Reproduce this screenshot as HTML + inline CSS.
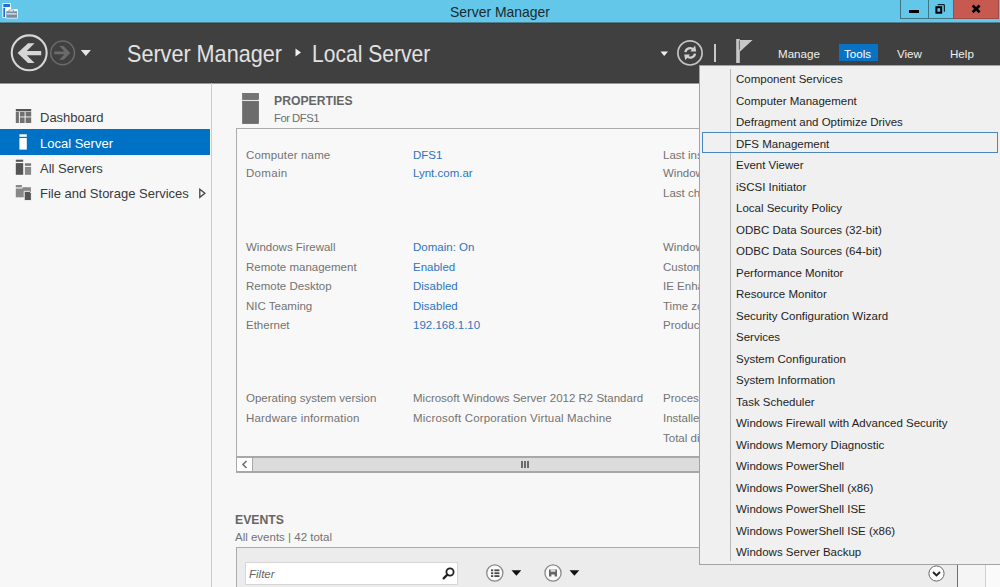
<!DOCTYPE html>
<html><head><meta charset="utf-8">
<style>
*{margin:0;padding:0;box-sizing:border-box}
html,body{width:1000px;height:587px;overflow:hidden;background:#f7f7f7;font-family:"Liberation Sans",sans-serif;position:relative}
.a{position:absolute;white-space:nowrap;line-height:1}
#title{left:0;top:0;width:1000px;height:22px;background:#63c7e9}
#hdr{left:0;top:22px;width:1000px;height:61px;background:#404040;border-top:1px solid #52808f;box-shadow:inset 0 1px 0 #3a3a3a,inset 0 -1px 0 #393939,0 1px 0 #9a9a9a}
.nav{font-size:13px;color:#3a3a3a;left:40px}
.lbl{font-size:11.5px;color:#737373}
.val{font-size:11.5px;color:#2f74c0}
#menu{left:699px;top:65px;width:320px;height:500px;background:#f0f0f0;border:1px solid #a3a3a3}
.mi{font-size:11.5px;color:#1e1e1e;left:736px}
.wb{top:0;height:19px;border:1px solid #3f7585;border-top:none}
</style></head><body>
<div id="title" class="a"></div>
<!-- app icon -->
<svg class="a" style="left:0;top:0" width="20" height="20" viewBox="0 0 20 20">
  <rect x="2.4" y="3" width="8.6" height="15" fill="#fff" rx="0.8"/>
  <rect x="3.3" y="4" width="6.8" height="3" fill="#1a73d0"/>
  <rect x="3.3" y="7.8" width="1.9" height="9.4" fill="#1a73d0"/>
  <rect x="5.5" y="9" width="12.4" height="9.6" fill="#fff" rx="1"/>
  <rect x="6.3" y="11.2" width="10.8" height="6.6" fill="#7b8ea0"/>
  <rect x="8.6" y="9.6" width="5.2" height="1.8" fill="#7b8ea0"/>
  <rect x="9.4" y="10.3" width="3.6" height="1" fill="#fff"/>
  <rect x="6.8" y="13.4" width="9.8" height="1" fill="#fff"/>
</svg>
<div class="a" style="left:450px;top:4px;font-size:15px;color:#1b2a30;transform:scaleX(0.93);transform-origin:0 0">Server Manager</div>
<div class="a wb" style="left:900px;width:29px;background:#63c7e9"></div>
<div class="a wb" style="left:928px;width:26px;background:#63c7e9"></div>
<div class="a wb" style="left:953px;width:46px;background:#c75a50;border-color:#9c4a44"></div>
<div class="a" style="left:909px;top:10px;width:10px;height:3px;background:#000"></div>
<svg class="a" style="left:925px;top:0" width="65" height="22" viewBox="925 0 65 22">
  <path d="M937.7 4.7H944.3V11.7" fill="none" stroke="#000" stroke-width="1"/>
  <rect x="936.4" y="7.2" width="4.8" height="5.5" fill="none" stroke="#000" stroke-width="2"/>
  <path d="M972.6 5.6L979.6 12.3M979.6 5.6L972.6 12.3" stroke="#000" stroke-width="2.7"/>
</svg>

<div id="hdr" class="a"></div>
<!-- back / forward -->
<svg class="a" style="left:0;top:0" width="100" height="80" viewBox="0 0 100 80">
  <circle cx="29.2" cy="52.8" r="17.45" fill="none" stroke="#d6d6d6" stroke-width="2.1"/>
  <path d="M17.6 53.1L28 43.2H34.6L26.8 51H41.2V55.3H26.8L34.6 63H28Z" fill="#d6d6d6"/>
  <circle cx="62.6" cy="52.9" r="11.85" fill="none" stroke="#6b6b6b" stroke-width="1.5"/>
  <path d="M70.3 52.9L63.5 46H59.3L64.5 51.6H54.2V54.2H64.5L59.3 59.8H63.5Z" fill="#6b6b6b"/>
  <path d="M80.8 49.9H90.9L85.85 55.9Z" fill="#e6e6e6"/>
</svg>
<div class="a" style="left:127px;top:42px;font-size:24px;color:#e2e2e2;transform:scaleX(0.9);transform-origin:0 0">Server Manager</div>
<svg class="a" style="left:295px;top:48px" width="7" height="9"><path d="M0.5 0.5L6 4.5L0.5 8.5Z" fill="#f0f0f0"/></svg>
<div class="a" style="left:312px;top:42px;font-size:24px;color:#e2e2e2;transform:scaleX(0.877);transform-origin:0 0">Local Server</div>
<!-- right header icons -->
<svg class="a" style="left:660px;top:51px" width="9" height="6"><path d="M0.5 0.5H8L4.2 5Z" fill="#f0f0f0"/></svg>
<svg class="a" style="left:670px;top:35px" width="40" height="36" viewBox="670 35 40 36">
  <circle cx="690" cy="52.9" r="12.1" fill="none" stroke="#c4c4c4" stroke-width="1.7"/>
  <path d="M685.4 52.2A4.7 4.7 0 0 1 693.4 49.6" fill="none" stroke="#d0d0d0" stroke-width="2.3"/>
  <path d="M690.4 51.4H696.2L695.1 45.6Z" fill="#d0d0d0"/>
  <path d="M695 53.6A4.7 4.7 0 0 1 687 56.2" fill="none" stroke="#d0d0d0" stroke-width="2.3"/>
  <path d="M690 54.4H684.2L685.3 60.2Z" fill="#d0d0d0"/>
</svg>
<div class="a" style="left:714px;top:44px;width:2px;height:18px;background:#c8c8c8"></div>
<svg class="a" style="left:0;top:0" width="760" height="70" viewBox="0 0 760 70">
  <rect x="736.2" y="39" width="3.6" height="24" fill="#c8c8c8"/>
  <rect x="738.9" y="40.6" width="0.9" height="9" fill="#404040"/>
  <path d="M739.8 40H752.6L739.8 51.8Z" fill="#c8c8c8"/>
</svg>
<div class="a" style="left:778px;top:48px;font-size:11.6px;color:#f0f0f0">Manage</div>
<div class="a" style="left:839px;top:44px;width:39px;height:17px;background:#0a72c4"></div>
<div class="a" style="left:844px;top:48px;font-size:11.6px;color:#fff">Tools</div>
<div class="a" style="left:897px;top:48px;font-size:11.6px;color:#f0f0f0">View</div>
<div class="a" style="left:950px;top:48px;font-size:11.6px;color:#f0f0f0">Help</div>

<!-- nav -->
<div class="a" style="left:211px;top:83px;width:1px;height:504px;background:#cdcdcd"></div>
<div class="a" style="left:0;top:129px;width:210px;height:26px;background:#0072c6"></div>

<svg class="a" style="left:0;top:0" width="40" height="210" viewBox="0 0 40 210">
  <rect x="15.8" y="109" width="15.4" height="2.3" fill="#555"/>
  <rect x="15.8" y="111.9" width="3.1" height="11.1" fill="#707070"/>
  <rect x="19.9" y="111.9" width="4.7" height="4.6" fill="#707070"/>
  <rect x="25.6" y="111.9" width="5.6" height="4.6" fill="#707070"/>
  <rect x="19.9" y="117.4" width="4.7" height="5.6" fill="#707070"/>
  <rect x="25.6" y="117.4" width="5.6" height="5.6" fill="#707070"/>
  <rect x="19.4" y="134.3" width="7.4" height="2.5" fill="#fff"/>
  <rect x="19.4" y="138" width="7.4" height="11.6" fill="#fff"/>
  <rect x="15.8" y="159.7" width="7.4" height="2.1" fill="#555"/>
  <rect x="15.8" y="163.1" width="7.4" height="11.7" fill="#555"/>
  <rect x="24.9" y="163.3" width="6.2" height="2.5" fill="#777"/>
  <rect x="24.9" y="166.9" width="6.2" height="7.9" fill="#888"/>
  <rect x="15.8" y="185" width="6.1" height="2.4" fill="#888"/>
  <rect x="15.8" y="188.5" width="9" height="8.8" fill="#888"/>
  <rect x="22.5" y="187.2" width="8.4" height="5" fill="#888"/>
  <path d="M24.2 191.3H29.5L31.4 193.2V200.6H24.2Z" fill="#555" stroke="#f5f5f5" stroke-width="1"/>
</svg>
<div class="a nav" style="top:111px">Dashboard</div>

<div class="a nav" style="top:137px;color:#fff">Local Server</div>

<div class="a nav" style="top:162px">All Servers</div>

<div class="a nav" style="top:187px">File and Storage Services</div>
<svg class="a" style="left:199px;top:188px" width="8" height="11" viewBox="0 0 8 11"><path d="M0.8 1.3L5.9 5.3L0.8 9.3Z" fill="none" stroke="#444" stroke-width="1.3"/></svg>

<!-- properties -->
<svg class="a" style="left:236px;top:88px" width="30" height="40" viewBox="236 88 30 40">
  <rect x="242.5" y="93.3" width="16.1" height="6.3" fill="#747474" stroke="#5e5e5e" stroke-width="0.6"/>
  <rect x="242.5" y="101.2" width="16.1" height="22.4" fill="#6c6c6c" stroke="#5e5e5e" stroke-width="0.6"/>
</svg>
<div class="a" style="left:274px;top:95px;font-size:12.2px;font-weight:bold;color:#666">PROPERTIES</div>
<div class="a" style="left:274px;top:113px;font-size:11.3px;letter-spacing:-0.5px;color:#6e6e6e">For DFS1</div>
<div class="a" style="left:236px;top:128px;width:480px;height:345px;border:1px solid #acacac;background:#f8f8f8"></div>

<div class="a lbl" style="left:246px;top:150px;letter-spacing:0.15px">Computer name</div>
<div class="a lbl" style="left:246px;top:168px;letter-spacing:0.3px">Domain</div>
<div class="a val" style="left:413px;top:150px">DFS1</div>
<div class="a val" style="left:413px;top:168px">Lynt.com.ar</div>
<div class="a lbl" style="left:663px;top:150px">Last installed updates</div>
<div class="a lbl" style="left:663px;top:168px">Windows Update</div>
<div class="a lbl" style="left:663px;top:188px">Last checked for updates</div>

<div class="a lbl" style="left:246px;top:242px">Windows Firewall</div>
<div class="a lbl" style="left:246px;top:262px">Remote management</div>
<div class="a lbl" style="left:246px;top:281px">Remote Desktop</div>
<div class="a lbl" style="left:246px;top:301px">NIC Teaming</div>
<div class="a lbl" style="left:246px;top:320px">Ethernet</div>
<div class="a val" style="left:413px;top:242px">Domain: On</div>
<div class="a val" style="left:413px;top:262px">Enabled</div>
<div class="a val" style="left:413px;top:281px">Disabled</div>
<div class="a val" style="left:413px;top:301px">Disabled</div>
<div class="a val" style="left:413px;top:320px">192.168.1.10</div>
<div class="a lbl" style="left:663px;top:242px">Windows Error Reporting</div>
<div class="a lbl" style="left:663px;top:262px">Customer Experience</div>
<div class="a lbl" style="left:663px;top:281px">IE Enhanced Security</div>
<div class="a lbl" style="left:663px;top:301px">Time zone</div>
<div class="a lbl" style="left:663px;top:320px">Product ID</div>

<div class="a lbl" style="left:246px;top:393px">Operating system version</div>
<div class="a lbl" style="left:246px;top:413px;letter-spacing:0.18px">Hardware information</div>
<div class="a lbl" style="left:413px;top:393px">Microsoft Windows Server 2012 R2 Standard</div>
<div class="a lbl" style="left:413px;top:413px;letter-spacing:0.18px">Microsoft Corporation Virtual Machine</div>
<div class="a lbl" style="left:663px;top:393px">Processors</div>
<div class="a lbl" style="left:663px;top:413px">Installed memory</div>
<div class="a lbl" style="left:663px;top:433px">Total disk space</div>

<!-- scrollbar -->
<div class="a" style="left:236px;top:456px;width:480px;height:17px;background:#dcdcdc;border:1px solid #a8a8a8;border-top-width:2px;border-bottom-width:2px"></div>
<div class="a" style="left:237px;top:458px;width:16px;height:13px;background:#fff;border-right:1px solid #a8a8a8"></div>
<svg class="a" style="left:241px;top:460px" width="8" height="9"><path d="M5.5 1L2 4.5L5.5 8" fill="none" stroke="#707070" stroke-width="1.6"/></svg>
<div class="a" style="left:521px;top:461px;width:2px;height:7px;background:#6a6a6a"></div>
<div class="a" style="left:524px;top:461px;width:2px;height:7px;background:#6a6a6a"></div>
<div class="a" style="left:527px;top:461px;width:2px;height:7px;background:#6a6a6a"></div>

<!-- events -->
<div class="a" style="left:235px;top:514px;font-size:12.2px;font-weight:bold;color:#666">EVENTS</div>
<div class="a" style="left:235px;top:532px;font-size:11.5px;color:#737373">All events | 42 total</div>
<div class="a" style="left:236px;top:547px;width:800px;height:60px;background:#ececec;border:1px solid #acacac"></div>
<div class="a" style="left:245px;top:562px;width:213px;height:23px;background:#fff;border:1px solid #d6d6d6"></div>
<div class="a" style="left:249px;top:569px;font-size:11.5px;font-style:italic;color:#666">Filter</div>
<svg class="a" style="left:442px;top:567px" width="14" height="13" viewBox="0 0 14 13">
  <circle cx="8" cy="5" r="3.6" fill="none" stroke="#222" stroke-width="1.8"/>
  <path d="M5.4 7.6L1.6 11.4" stroke="#222" stroke-width="2.2" stroke-linecap="round"/>
</svg>

<svg class="a" style="left:480px;top:560px" width="90" height="27" viewBox="480 560 90 27">
  <circle cx="494.8" cy="573" r="8.1" fill="#fafafa" stroke="#8a8a8a" stroke-width="1.3"/>
  <g fill="#4a4a4a">
  <rect x="491" y="569.4" width="2.2" height="1.8"/><rect x="494.4" y="569.4" width="5" height="1.8"/>
  <rect x="491" y="572.3" width="2.2" height="1.8"/><rect x="494.4" y="572.3" width="5" height="1.8"/>
  <rect x="491" y="575.2" width="2.2" height="1.8"/><rect x="494.4" y="575.2" width="5" height="1.8"/>
  </g>
  <circle cx="553" cy="573" r="8.1" fill="#fafafa" stroke="#8a8a8a" stroke-width="1.3"/>
  <path d="M549 569.4H557V576.6H554.6V574.4H551.4V576.6H549Z" fill="#666"/>
  <rect x="550.6" y="569.4" width="4.8" height="2.4" fill="#ddd"/>
</svg>
<svg class="a" style="left:511px;top:570px" width="11" height="6"><path d="M0.5 0.3H10.3L5.4 5.8Z" fill="#111"/></svg>

<svg class="a" style="left:569px;top:570px" width="11" height="6"><path d="M0.5 0.3H10.3L5.4 5.8Z" fill="#111"/></svg>

<div class="a" style="left:957px;top:565px;width:1px;height:22px;background:#6f6f6f"></div>
<div class="a" style="left:958px;top:565px;width:27px;height:22px;background:#f5f5f5"></div>
<div class="a" style="left:985px;top:565px;width:1px;height:22px;background:#cfcfcf"></div>
<div class="a" style="left:986px;top:565px;width:14px;height:22px;background:#fafafa"></div>
<svg class="a" style="left:928px;top:565px" width="17" height="17" viewBox="0 0 17 17">
  <circle cx="8.5" cy="8.5" r="7.6" fill="#fff" stroke="#666" stroke-width="1"/>
  <path d="M5 7L8.5 10.4L12 7" fill="none" stroke="#222" stroke-width="1.9"/>
</svg>

<!-- tools menu -->
<div id="menu" class="a"></div>
<div class="a" style="left:730px;top:69px;width:1px;height:492px;background:#b8b8b8"></div>
<div class="a" style="left:702px;top:132px;width:296px;height:21px;border:1px solid #4a86c0"></div>
<div class="a mi" style="top:74px">Component Services</div>
<div class="a mi" style="top:95.5px">Computer Management</div>
<div class="a mi" style="top:117px">Defragment and Optimize Drives</div>
<div class="a mi" style="top:138.5px">DFS Management</div>
<div class="a mi" style="top:160px">Event Viewer</div>
<div class="a mi" style="top:181.5px">iSCSI Initiator</div>
<div class="a mi" style="top:203px">Local Security Policy</div>
<div class="a mi" style="top:224.5px">ODBC Data Sources (32-bit)</div>
<div class="a mi" style="top:246px">ODBC Data Sources (64-bit)</div>
<div class="a mi" style="top:267.5px">Performance Monitor</div>
<div class="a mi" style="top:289px">Resource Monitor</div>
<div class="a mi" style="top:310.5px">Security Configuration Wizard</div>
<div class="a mi" style="top:332px">Services</div>
<div class="a mi" style="top:353.5px">System Configuration</div>
<div class="a mi" style="top:375px">System Information</div>
<div class="a mi" style="top:396.5px">Task Scheduler</div>
<div class="a mi" style="top:418px">Windows Firewall with Advanced Security</div>
<div class="a mi" style="top:439.5px">Windows Memory Diagnostic</div>
<div class="a mi" style="top:461px">Windows PowerShell</div>
<div class="a mi" style="top:482.5px">Windows PowerShell (x86)</div>
<div class="a mi" style="top:504px">Windows PowerShell ISE</div>
<div class="a mi" style="top:525.5px">Windows PowerShell ISE (x86)</div>
<div class="a mi" style="top:547px">Windows Server Backup</div>
</body></html>
